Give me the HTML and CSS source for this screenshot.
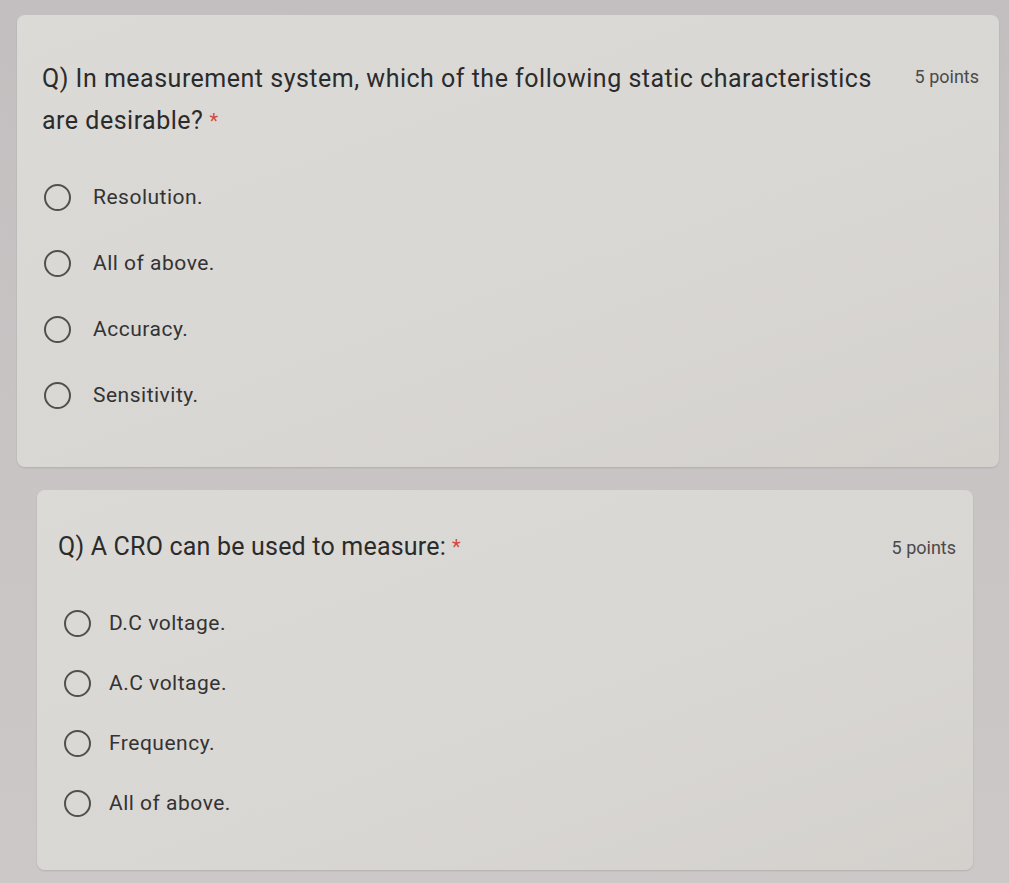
FILE: index.html
```html
<!DOCTYPE html>
<html lang="en">
<head>
    <meta charset="UTF-8">
    <meta name="viewport" content="width=device-width, initial-scale=1.0">
    <title>Quiz</title>
    <link rel="stylesheet" href="styles.css">
</head>
<body>

    <!-- Question 1 -->
    <div class="card card-first">
        <div class="question-head">
            <div class="question">Q) In measurement system, which of the following static characteristics are desirable?<span class="required">*</span></div>
            <div class="points">5 points</div>
        </div>
        <div class="options">
            <label class="option"><span class="radio"></span>Resolution.</label>
            <label class="option"><span class="radio"></span>All of above.</label>
            <label class="option"><span class="radio"></span>Accuracy.</label>
            <label class="option"><span class="radio"></span>Sensitivity.</label>
        </div>
    </div>

    <!-- Question 2 -->
    <div class="card card-second">
        <div class="question-head">
            <div class="question">Q) A CRO can be used to measure:<span class="required">*</span></div>
            <div class="points">5 points</div>
        </div>
        <div class="options">
            <label class="option"><span class="radio"></span>D.C voltage.</label>
            <label class="option"><span class="radio"></span>A.C voltage.</label>
            <label class="option"><span class="radio"></span>Frequency.</label>
            <label class="option"><span class="radio"></span>All of above.</label>
        </div>
    </div>

</body>
</html>
```

FILE: styles.css
```css
/* Global Styles */
body {
    font-family: 'Roboto', 'Liberation Sans', sans-serif;
    background: linear-gradient(180deg, #c3bfc0 0%, #c8c4c4 50%, #ccc8c7 100%);
    color: #333;
    margin: 0;
    padding: 15px 0 0 0;
    height: 868px;
    overflow: hidden;
}

.card {
    background: linear-gradient(160deg, #dcdad7 0%, #d9d7d4 60%, #d4d1cd 100%);
    border-radius: 8px;
    box-shadow: 0 1px 2px rgba(0, 0, 0, 0.12);
}

.card-first {
    margin-left: 17px;
    width: 982px;
    height: 452px;
    padding: 43px 20px 0 25px;
    box-sizing: border-box;
}

.card-second {
    margin-top: 23px;
    margin-left: 37px;
    width: 936px;
    height: 380px;
    padding: 36px 17px 0 21px;
    box-sizing: border-box;
}

.question-head {
    display: flex;
    justify-content: space-between;
    align-items: flex-start;
    gap: 20px;
}

.question {
    font-size: 25px;
    line-height: 42px;
    color: #2b2b2b;
    flex: 1;
}

.card-first .question {
    letter-spacing: 0.5px;
    max-width: 840px;
}

.card-second .question {
    letter-spacing: 0.2px;
}

.required {
    color: #d24a3e;
    font-size: 20px;
    margin-left: 6px;
    vertical-align: top;
}

.points {
    font-size: 18px;
    color: #4a4a4a;
    line-height: 42px;
    white-space: nowrap;
}

.card-first .points {
    margin-top: -2px;
}

.card-second .points {
    margin-top: 1px;
}

.options {
    display: flex;
    flex-direction: column;
}

.card-first .options {
    margin-top: 22px;
}

.card-second .options {
    margin-top: 24px;
}

.option {
    display: flex;
    align-items: center;
    font-size: 21px;
    letter-spacing: 0.5px;
    color: #333;
}

.card-first .option {
    height: 66px;
    padding-left: 2px;
}

.card-second .option {
    height: 60px;
    padding-left: 6px;
}

.radio {
    width: 23px;
    height: 23px;
    border: 2.5px solid #505050;
    border-radius: 50%;
    margin-right: 22px;
    flex-shrink: 0;
}

.card-second .radio {
    margin-right: 18px;
}
```
